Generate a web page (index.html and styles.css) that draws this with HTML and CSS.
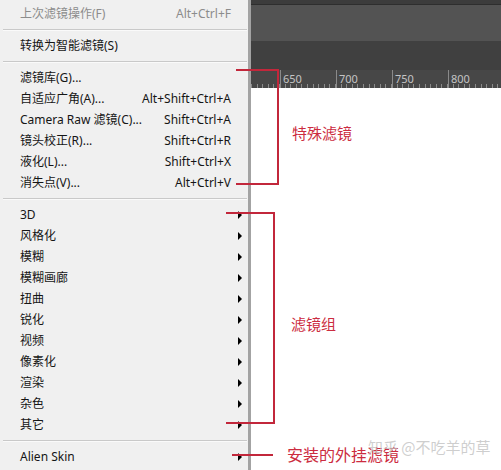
FILE: index.html
```html
<!DOCTYPE html>
<html lang="zh-CN">
<head>
  <meta charset="UTF-8" />
  <title>滤镜菜单</title>
  <link rel="stylesheet" href="styles.css">
</head>
<body>
  <div class="screen">
    <div class="menu">
      <div class="item disabled"><span>上次滤镜操作(F)</span><span>Alt+Ctrl+F</span></div>
      <div class="sep"></div>
      <div class="item"><span>转换为智能滤镜(S)</span></div>
      <div class="sep"></div>
      <div class="item"><span>滤镜库(G)...</span></div>
      <div class="item"><span>自适应广角(A)...</span><span>Alt+Shift+Ctrl+A</span></div>
      <div class="item"><span>Camera Raw 滤镜(C)...</span><span>Shift+Ctrl+A</span></div>
      <div class="item"><span>镜头校正(R)...</span><span>Shift+Ctrl+R</span></div>
      <div class="item"><span>液化(L)...</span><span>Shift+Ctrl+X</span></div>
      <div class="item"><span>消失点(V)...</span><span>Alt+Ctrl+V</span></div>
      <div class="sep"></div>
      <div class="item sub"><span>3D</span><i class="arrow"></i></div>
      <div class="item sub"><span>风格化</span><i class="arrow"></i></div>
      <div class="item sub"><span>模糊</span><i class="arrow"></i></div>
      <div class="item sub"><span>模糊画廊</span><i class="arrow"></i></div>
      <div class="item sub"><span>扭曲</span><i class="arrow"></i></div>
      <div class="item sub"><span>锐化</span><i class="arrow"></i></div>
      <div class="item sub"><span>视频</span><i class="arrow"></i></div>
      <div class="item sub"><span>像素化</span><i class="arrow"></i></div>
      <div class="item sub"><span>渲染</span><i class="arrow"></i></div>
      <div class="item sub"><span>杂色</span><i class="arrow"></i></div>
      <div class="item sub"><span>其它</span><i class="arrow"></i></div>
      <div class="sep"></div>
      <div class="item sub"><span>Alien Skin</span><i class="arrow"></i></div>
    </div>

    <div class="workspace">
      <div class="topstrip"></div>
      <div class="optionsbar"></div>
      <div class="tabbar"></div>
      <div class="ruler">
        <span class="mark">650</span>
        <span class="mark">700</span>
        <span class="mark">750</span>
        <span class="mark">800</span>
      </div>
      <div class="canvas"></div>
    </div>

    <!-- annotations drawn over the screenshot -->
    <div class="bracket b1"></div>
    <div class="bracket b2"></div>
    <div class="pointer"></div>
    <div class="label l1">特殊滤镜</div>
    <div class="label l2">滤镜组</div>
    <div class="label l3">安装的外挂滤镜</div>
    <div class="watermark">知乎 @不吃羊的草</div>
  </div>
</body>
</html>
```

FILE: styles.css
```css
body {
  margin: 0;
  font-family: "Noto Sans", "Noto Sans CJK SC", sans-serif;
}
.screen {
  position: relative;
  width: 501px;
  height: 470px;
  display: flex;
  overflow: hidden;
  background: #fff;
}
.menu {
  flex: none;
  width: 248px;
  padding-top: 3px;
  background: #f0f0f0;
  border-right: 3px solid #a3a3a3;
  box-sizing: content-box;
  font-size: 12px;
  color: #151515;
}
.item {
  height: 21px;
  line-height: 21px;
  display: flex;
  justify-content: space-between;
  align-items: center;
  padding: 0 17px 0 20px;
}
.item.disabled {
  color: #8c8c8c;
}
.item.sub {
  padding-right: 6px;
}
.arrow {
  width: 0;
  height: 0;
  border-top: 4px solid transparent;
  border-bottom: 4px solid transparent;
  border-left: 4px solid #000;
}
.sep {
  height: 0;
  margin: 4.5px 1px 4.5px 3px;
  border-top: 1px solid #c9c9c9;
  border-bottom: 1px solid #fafafa;
}
.workspace {
  flex: 1;
  min-width: 0;
  display: flex;
  flex-direction: column;
}
.topstrip {
  height: 4px;
  background: #3c3c3c;
  border-bottom: 1px solid #2e2e2e;
}
.optionsbar {
  height: 36px;
  background: #535353;
}
.tabbar {
  height: 29px;
  background: #404040;
}
.ruler {
  height: 18px;
  display: flex;
  overflow: hidden;
  padding-left: 29px;
  background-color: #474747;
  background-image: repeating-linear-gradient(to right, #8a8a8a 0 1px, transparent 1px 5.6px);
  background-size: 100% 4px;
  background-repeat: no-repeat;
  background-position: 0 bottom;
}
.mark {
  flex: none;
  width: 56px;
  padding-left: 2px;
  border-left: 1px solid #8a8a8a;
  font-size: 11px;
  line-height: 18px;
  color: #c4c4c4;
  box-sizing: border-box;
}
.canvas {
  flex: 1;
  background: #fff;
}
.bracket {
  position: absolute;
  border: 2px solid #c2273b;
  border-left: none;
}
.b1 {
  left: 236px;
  top: 69px;
  width: 41px;
  height: 112px;
}
.b2 {
  left: 226px;
  top: 212px;
  width: 47px;
  height: 208px;
}
.pointer {
  position: absolute;
  left: 232px;
  top: 454px;
  width: 41px;
  height: 2px;
  background: #c2273b;
}
.label {
  position: absolute;
  font-family: "Noto Sans CJK SC", sans-serif;
  font-size: 15px;
  line-height: 20px;
  color: #cc2c40;
}
.l1 {
  left: 292px;
  top: 123px;
}
.l2 {
  left: 291px;
  top: 314px;
}
.l3 {
  left: 287px;
  top: 444px;
  font-size: 16px;
}
.watermark {
  position: absolute;
  left: 368px;
  top: 437px;
  font-family: "Noto Sans CJK SC", sans-serif;
  font-size: 15px;
  line-height: 20px;
  color: rgba(190, 190, 190, 0.75);
}
```
